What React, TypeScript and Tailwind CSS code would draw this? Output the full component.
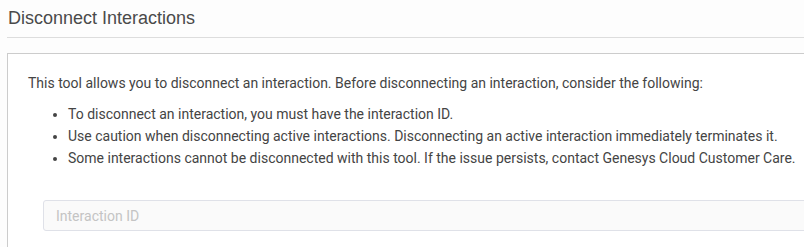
import React from 'react';

const notes = [
  'To disconnect an interaction, you must have the interaction ID.',
  'Use caution when disconnecting active interactions. Disconnecting an active interaction immediately terminates it.',
  'Some interactions cannot be disconnected with this tool. If the issue persists, contact Genesys Cloud Customer Care.',
];

export default function App() {
  return (
    <div className="w-full h-[247px] overflow-hidden bg-[#fdfdfd] pl-[7px] pt-[6px]">
      <h1 className="font-['Liberation_Sans',Arial,sans-serif] text-[18px] leading-[24px] text-[#4a4a4a] pl-px pb-[7px] border-b border-[#dddddd]">
        Disconnect Interactions
      </h1>

      <div className="mt-[15px] mr-[-12px] border border-[#cccccc] bg-white pl-5 pt-[18px] pb-8 font-['Roboto',sans-serif] text-[14px] leading-[22px] text-[#444444]">
        <p className="mb-[9px]">
          This tool allows you to disconnect an interaction. Before disconnecting an interaction, consider the
          following:
        </p>
        <ul className="list-disc pl-10">
          {notes.map((note) => (
            <li key={note}>{note}</li>
          ))}
        </ul>

        <input
          type="text"
          placeholder="Interaction ID"
          className="mt-[31px] ml-[15px] block w-[800px] h-[31px] rounded-[3px] border border-[#dfe1e8] bg-[#fafafa] px-3 text-[14px] text-[#444444] placeholder:text-[#c4c4c4] outline-none"
        />
      </div>
    </div>
  );
}
